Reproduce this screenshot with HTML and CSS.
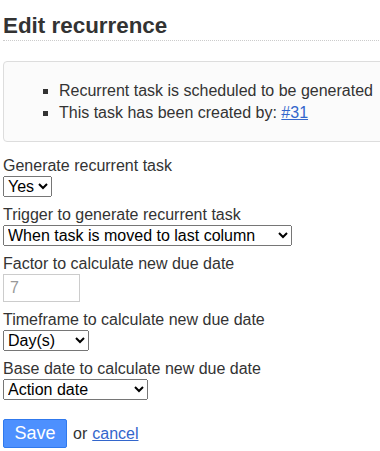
FILE: index.html
```html
<!DOCTYPE html>
<html lang="en">
<head>
<meta charset="utf-8">
<title>Edit recurrence</title>
<link rel="stylesheet" href="styles.css">
</head>
<body>
<div class="page">
  <div class="page-header">
    <h2>Edit recurrence</h2>
  </div>
  <div class="alert">
    <ul>
      <li>Recurrent task is scheduled to be generated</li>
      <li>This task has been created by: <a href="#">#31</a></li>
    </ul>
  </div>
  <form class="form">
    <label for="r-status">Generate recurrent task</label>
    <select id="r-status">
      <option>No</option>
      <option selected>Yes</option>
    </select>

    <label for="r-trigger">Trigger to generate recurrent task</label>
    <select id="r-trigger">
      <option>When task is moved from first column</option>
      <option selected>When task is moved to last column</option>
      <option>When task is closed</option>
    </select>

    <label for="r-factor">Factor to calculate new due date</label>
    <input id="r-factor" type="text" class="input-factor" placeholder="7">

    <label for="r-timeframe">Timeframe to calculate new due date</label>
    <select id="r-timeframe">
      <option selected>Day(s)</option>
      <option>Month(s)</option>
      <option>Year(s)</option>
    </select>

    <label for="r-basedate">Base date to calculate new due date</label>
    <select id="r-basedate">
      <option>Existing due date</option>
      <option selected>Action date</option>
    </select>

    <div class="form-actions">
      <button type="button" class="btn-blue">Save</button>
      <span class="or">or</span>
      <a href="#">cancel</a>
    </div>
  </form>
</div>
</body>
</html>
```

FILE: styles.css
```css
html, body {
  margin: 0;
  padding: 0;
  overflow: hidden;
  background: #fff;
}
body {
  font-family: "Liberation Sans", Arial, sans-serif;
  font-size: 16px;
  color: #333;
}
.page {
  width: 420px;
  padding-left: 3px;
}
a {
  color: #3366cc;
}
.page-header {
  margin-top: 12px;
  border-bottom: 1px dotted #ccc;
  margin-bottom: 20px;
}
.page-header h2 {
  margin: 0;
  font-size: 22.4px;
  line-height: 28px;
  font-weight: bold;
  color: #333;
}
.alert {
  background: #fbfbfb;
  border: 1px solid #ddd;
  border-radius: 4px;
  padding: 18px 14px 17px 14px;
}
.alert ul {
  margin: 0;
  padding-left: 41px;
  list-style-type: square;
}
.alert li {
  line-height: 22px;
}
.form {
  margin-top: 14px;
}
.form label {
  display: block;
  line-height: 20px;
  margin-top: 8px;
}
.form label:first-child {
  margin-top: 0;
}
.form select {
  display: block;
  box-sizing: border-box;
  height: 21px;
  font-family: "Liberation Sans", Arial, sans-serif;
  font-size: 16px;
  color: #000;
  margin: 0;
}
.input-factor {
  display: block;
  box-sizing: border-box;
  width: 77px;
  height: 28px;
  margin: 0 0 1px 0;
  padding: 3px 6px;
  border: 1px solid #ccc;
  font-family: "Liberation Sans", Arial, sans-serif;
  font-size: 16px;
}
.input-factor::placeholder {
  color: #999;
}
.form-actions {
  margin-top: 19px;
  display: flex;
  align-items: center;
}
.btn-blue {
  box-sizing: border-box;
  width: 64px;
  height: 29px;
  background: #4d90fe;
  border: 1px solid #3079ed;
  border-radius: 2px;
  color: #fff;
  font-family: "Liberation Sans", Arial, sans-serif;
  font-size: 18px;
  padding: 0;
}
.or {
  margin-left: 6px;
  margin-right: 5px;
}
```
